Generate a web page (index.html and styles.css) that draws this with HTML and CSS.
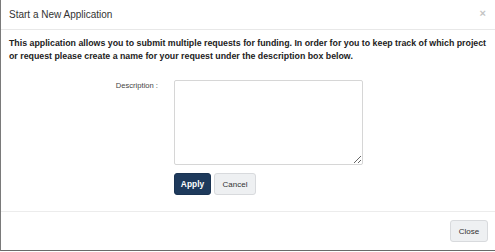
FILE: index.html
```html
<!DOCTYPE html>
<html>
<head>
<meta charset="utf-8">
<link rel="stylesheet" href="styles.css">
</head>
<body>
<div class="modal">
  <div class="modal-header">
    <span class="title">Start a New Application</span>
    <span class="close-x">×</span>
  </div>
  <div class="modal-body">
    <p class="intro">This application allows you to submit multiple requests for funding. In order for you to keep track of which project or request please create a name for your request under the description box below.</p>
    <div class="form-row">
      <label class="label">Description :</label>
      <div class="field">
        <textarea class="textarea"></textarea>
        <div class="actions">
          <button class="btn btn-primary">Apply</button>
          <button class="btn btn-default">Cancel</button>
        </div>
      </div>
    </div>
  </div>
  <div class="modal-footer">
    <button class="btn btn-default btn-close">Close</button>
  </div>
</div>
</body>
</html>
```
FILE: styles.css
```css
html, body {
  margin: 0;
  padding: 0;
  background: #fff;
}
body {
  font-family: "Liberation Sans", Arial, sans-serif;
  color: #333;
}
.modal {
  width: 494px;
  height: 250px;
  border-left: 1px solid #7a7a7a;
  border-bottom: 1px solid #6a6a6a;
  display: flex;
  flex-direction: column;
}
.modal-header {
  height: 30px;
  box-sizing: border-box;
  border-bottom: 1px solid #e8e8e8;
  display: flex;
  align-items: center;
  justify-content: space-between;
  padding: 0 9px 0 8px;
}
.title {
  font-size: 10px;
  color: #333;
}
.close-x {
  font-size: 11px;
  font-weight: bold;
  color: #c4c4c4;
  margin-top: -3px;
}
.modal-body {
  flex: 1;
  padding: 7px 6px 0 8px;
}
.intro {
  margin: 0;
  font-size: 8.8px;
  font-weight: bold;
  line-height: 13px;
  color: #222;
}
.form-row {
  display: flex;
  margin-top: 17px;
}
.label {
  width: 149px;
  text-align: right;
  font-size: 7.6px;
  color: #444;
  padding-top: 1px;
  margin-right: 16px;
}
.field {
  display: flex;
  flex-direction: column;
}
.textarea {
  width: 189px;
  height: 85px;
  box-sizing: border-box;
  margin: 0;
  border: 1px solid #d6d6d6;
  border-radius: 2px;
  resize: vertical;
}
.actions {
  display: flex;
  gap: 3px;
  margin-top: 8px;
}
.btn {
  font-family: "Liberation Sans", Arial, sans-serif;
  font-size: 8px;
  height: 22px;
  box-sizing: border-box;
  border-radius: 3px;
  padding: 0;
  margin: 0;
}
.btn-primary {
  background: #1e3a5c;
  color: #fff;
  border: 1px solid #1a3352;
  font-weight: bold;
  font-size: 8.4px;
  width: 37px;
}
.btn-default {
  background: #eef0f2;
  color: #333;
  border: 1px solid #d8dadd;
  width: 42px;
}
.modal-footer {
  height: 39px;
  box-sizing: border-box;
  border-top: 1px solid #ececec;
  display: flex;
  align-items: center;
  justify-content: flex-end;
  padding: 0 7px;
}
.btn-close {
  width: 38px;
}
```
